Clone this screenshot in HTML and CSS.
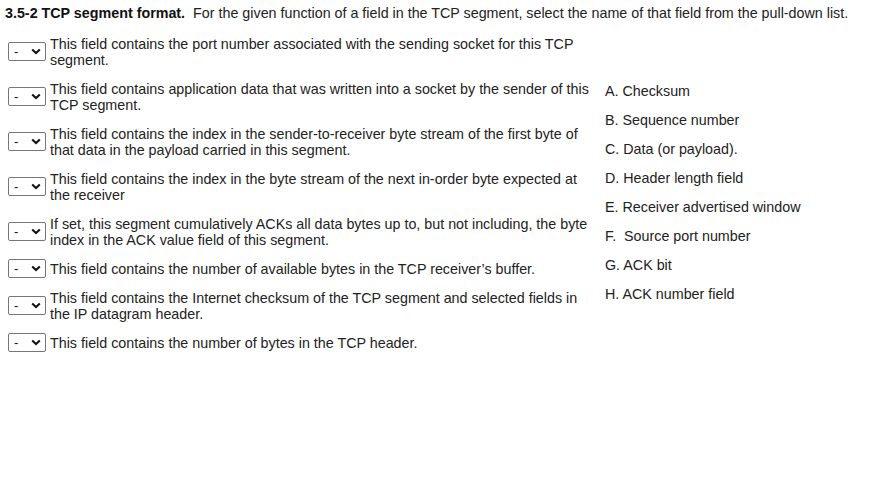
FILE: index.html
```html
<!DOCTYPE html>
<html>
<head>
<meta charset="utf-8">
<link rel="stylesheet" href="styles.css">
</head>
<body>
<div class="page">
  <p class="title"><b>3.5-2 TCP segment format.</b><span class="sp"></span>For the given function of a field in the TCP segment, select the name of that field from the pull-down list.</p>
  <div class="content">
    <div class="rows">
      <div class="row"><span class="sel"><span class="dash">-</span><svg class="chev" width="10" height="7" viewBox="0 0 10 7"><path d="M1.2 1.4 L5 5 L8.8 1.4" fill="none" stroke="#111" stroke-width="2"/></svg></span><span class="txt">This field contains the port number associated with the sending socket for this TCP segment.</span></div>
      <div class="row"><span class="sel"><span class="dash">-</span><svg class="chev" width="10" height="7" viewBox="0 0 10 7"><path d="M1.2 1.4 L5 5 L8.8 1.4" fill="none" stroke="#111" stroke-width="2"/></svg></span><span class="txt">This field contains application data that was written into a socket by the sender of this TCP segment.</span></div>
      <div class="row"><span class="sel"><span class="dash">-</span><svg class="chev" width="10" height="7" viewBox="0 0 10 7"><path d="M1.2 1.4 L5 5 L8.8 1.4" fill="none" stroke="#111" stroke-width="2"/></svg></span><span class="txt">This field contains the index in the sender-to-receiver byte stream of the first byte of that data in the payload carried in this segment.</span></div>
      <div class="row"><span class="sel"><span class="dash">-</span><svg class="chev" width="10" height="7" viewBox="0 0 10 7"><path d="M1.2 1.4 L5 5 L8.8 1.4" fill="none" stroke="#111" stroke-width="2"/></svg></span><span class="txt">This field contains the index in the byte stream of the next in-order byte expected at the receiver</span></div>
      <div class="row"><span class="sel"><span class="dash">-</span><svg class="chev" width="10" height="7" viewBox="0 0 10 7"><path d="M1.2 1.4 L5 5 L8.8 1.4" fill="none" stroke="#111" stroke-width="2"/></svg></span><span class="txt">If set, this segment cumulatively ACKs all data bytes up to, but not including, the byte index in the ACK value field of this segment.</span></div>
      <div class="row"><span class="sel"><span class="dash">-</span><svg class="chev" width="10" height="7" viewBox="0 0 10 7"><path d="M1.2 1.4 L5 5 L8.8 1.4" fill="none" stroke="#111" stroke-width="2"/></svg></span><span class="txt">This field contains the number of available bytes in the TCP receiver’s buffer.</span></div>
      <div class="row"><span class="sel"><span class="dash">-</span><svg class="chev" width="10" height="7" viewBox="0 0 10 7"><path d="M1.2 1.4 L5 5 L8.8 1.4" fill="none" stroke="#111" stroke-width="2"/></svg></span><span class="txt">This field contains the Internet checksum of the TCP segment and selected fields in the IP datagram header.</span></div>
      <div class="row"><span class="sel"><span class="dash">-</span><svg class="chev" width="10" height="7" viewBox="0 0 10 7"><path d="M1.2 1.4 L5 5 L8.8 1.4" fill="none" stroke="#111" stroke-width="2"/></svg></span><span class="txt">This field contains the number of bytes in the TCP header.</span></div>
    </div>
    <ul class="opts">
      <li>A. Checksum</li>
      <li>B. Sequence number</li>
      <li>C. Data (or payload).</li>
      <li>D. Header length field</li>
      <li>E. Receiver advertised window</li>
      <li>F.&nbsp; Source port number</li>
      <li>G. ACK bit</li>
      <li>H. ACK number field</li>
    </ul>
  </div>
</div>
</body>
</html>
```
FILE: styles.css
```css
html, body {
  margin: 0;
  padding: 0;
  background: #fff;
}
body {
  font-family: "Liberation Sans", Arial, sans-serif;
  font-size: 14.3px;
  line-height: 16px;
  color: #222;
}
.page {
  padding: 5px 0 0 5px;
}
.title {
  margin: 0 0 13px 0;
  color: #222;
}
.title b {
  color: #111;
}
.sp {
  display: inline-block;
  width: 8px;
}
.content {
  display: flex;
  align-items: center;
}
.rows {
  display: flex;
  flex-direction: column;
  gap: 13px;
  width: 596px;
  padding: 2px 0;
}
.row {
  display: flex;
  align-items: center;
}
.sel {
  flex: none;
  box-sizing: border-box;
  width: 38px;
  height: 19px;
  margin: -2px 4px -1px 3px;
  border: 1px solid #767676;
  border-radius: 2px;
  display: flex;
  align-items: center;
  justify-content: space-between;
  padding: 0 4px 0 5px;
  color: #111;
  font-size: 13px;
}
.dash {
  line-height: 14px;
}
.chev {
  display: block;
}
.txt {
  width: 545px;
}
.opts {
  list-style: none;
  margin: 0 0 2px 4px;
  padding: 0;
  display: flex;
  flex-direction: column;
  gap: 13px;
}
```
